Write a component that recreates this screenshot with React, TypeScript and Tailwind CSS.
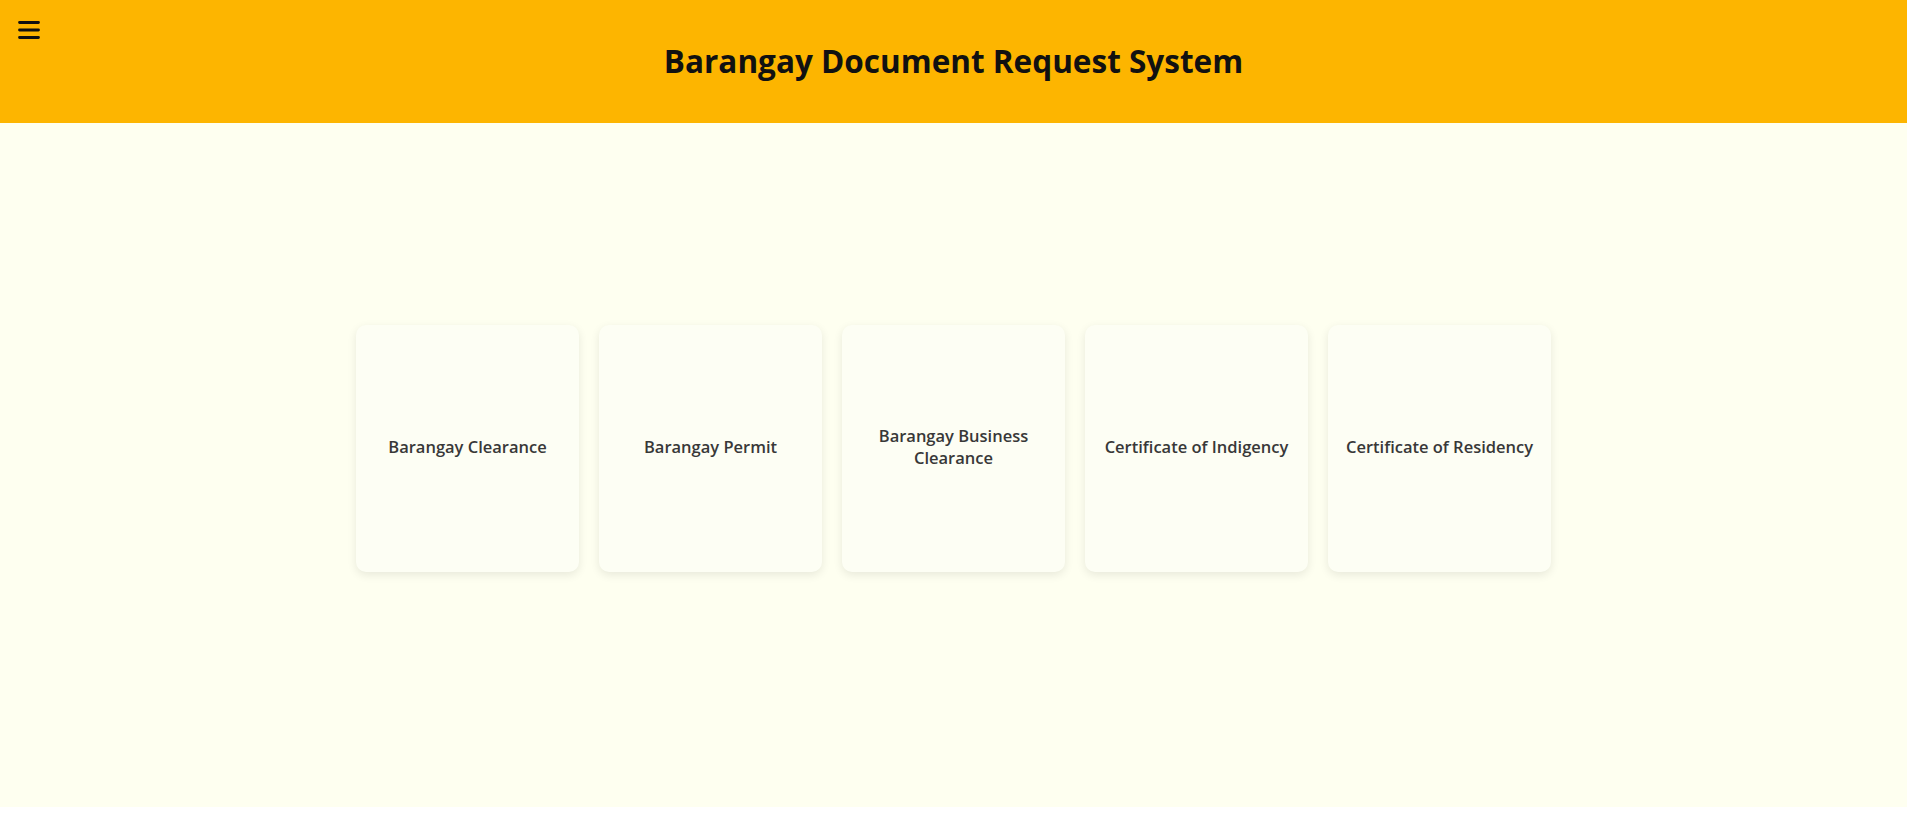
import React from 'react';

const documents = [
  'Barangay Clearance',
  'Barangay Permit',
  'Barangay Business Clearance',
  'Certificate of Indigency',
  'Certificate of Residency',
];

export default function App() {
  return (
    <div className="w-full font-['Open_Sans',sans-serif]">
      {/* Header */}
      <header className="relative flex h-[123px] items-center justify-center bg-[#fdb500]">
        <button className="absolute left-[16px] top-[19px]" aria-label="Menu">
          <svg width="25" height="22" viewBox="0 0 25 22" fill="none">
            <path d="M3.5 3.5h19M3.5 11h19M3.5 18.5h19" stroke="#111" strokeWidth="2.8" strokeLinecap="round" />
          </svg>
        </button>
        <h1 className="pb-[2px] text-[31.5px] font-bold text-[#111]">Barangay Document Request System</h1>
      </header>

      {/* Document cards */}
      <main className="flex h-[684px] items-start justify-center bg-[#fefff0] pt-[202px]">
        <div className="flex gap-[20px]">
          {documents.map((doc) => (
            <div
              key={doc}
              className="flex h-[247px] w-[223px] cursor-pointer items-center justify-center rounded-[10px] bg-[#fdfef4] px-4 pb-[3px] text-center shadow-[0_3px_10px_rgba(0,0,0,0.09)]"
            >
              <span className="text-[16.5px] font-semibold leading-[22px] text-[#383838]">{doc}</span>
            </div>
          ))}
        </div>
      </main>
    </div>
  );
}
